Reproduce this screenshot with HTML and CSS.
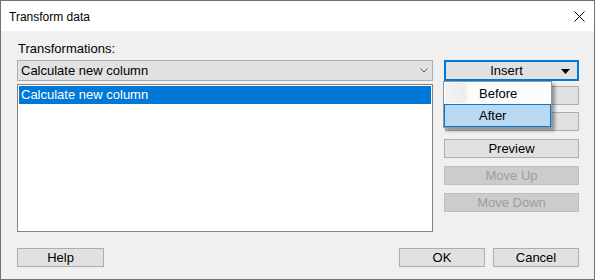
FILE: index.html
```html
<!DOCTYPE html>
<html lang="en">
<head>
    <meta charset="UTF-8">
    <title>Transform data</title>
    <link rel="stylesheet" href="styles.css">
</head>
<body>
    <div class="window">
        <div class="titlebar">
            <span class="title">Transform data</span>
            <svg class="close" width="11" height="11" viewBox="0 0 11 11">
                <path d="M0.5 0.5 L10.5 10.5 M10.5 0.5 L0.5 10.5" stroke="#000" stroke-width="1" fill="none"/>
            </svg>
        </div>
        <div class="content">
            <div class="main">
                <div class="left">
                    <div class="label">Transformations:</div>
                    <div class="combo">
                        <span>Calculate new column</span>
                        <svg class="chevron" width="8" height="5" viewBox="0 0 8 5">
                            <path d="M0.5 0.5 L4 4 L7.5 0.5" stroke="#5a5a5a" stroke-width="1" fill="none"/>
                        </svg>
                    </div>
                    <div class="list">
                        <div class="item selected">Calculate new column</div>
                    </div>
                </div>
                <div class="right">
                    <div class="insert-wrap">
                        <div class="btn insert">
                            <span>Insert</span>
                            <svg class="caret" width="9" height="5" viewBox="0 0 9 5">
                                <path d="M0 0 L9 0 L4.5 5 Z" fill="#000"/>
                            </svg>
                        </div>
                        <div class="menu">
                            <div class="menu-item"><span class="gutter"></span><span>Before</span></div>
                            <div class="menu-item active"><span class="gutter"></span><span>After</span></div>
                        </div>
                    </div>
                    <div class="btn hidden-one"></div>
                    <div class="btn hidden-two"></div>
                    <div class="btn">Preview</div>
                    <div class="btn disabled">Move Up</div>
                    <div class="btn disabled">Move Down</div>
                </div>
            </div>
            <div class="footer">
                <div class="btn small">Help</div>
                <div class="spacer"></div>
                <div class="btn small">OK</div>
                <div class="btn small">Cancel</div>
            </div>
        </div>
    </div>
</body>
</html>
```

FILE: styles.css
```css
body {
    margin: 0;
    font-family: "Liberation Sans", Arial, sans-serif;
    font-size: 13px;
    color: #000;
    background: #fff;
}
.window {
    width: 595px;
    height: 280px;
    box-sizing: border-box;
    border: 1px solid #707070;
    background: #f0f0f0;
    display: flex;
    flex-direction: column;
}
.titlebar {
    height: 30px;
    background: #fff;
    display: flex;
    align-items: center;
    padding: 0 9px 0 8px;
}
.title {
    font-size: 12px;
    flex: 1;
    margin-top: 2px;
}
.close {
    margin-top: 1px;
}
.content {
    flex: 1;
    padding: 10px 15px 12px 16px;
    display: flex;
    flex-direction: column;
}
.main {
    display: flex;
    gap: 11px;
}
.left {
    width: 416px;
}
.label {
    height: 15px;
    line-height: 15px;
    margin-bottom: 4px;
    padding-left: 1px;
}
.combo {
    height: 21px;
    box-sizing: border-box;
    border: 1px solid #adadad;
    background: #e1e1e1;
    display: flex;
    align-items: center;
    padding: 0 2px 0 3px;
}
.combo span {
    flex: 1;
}
.chevron {
    margin-right: 2px;
}
.list {
    margin-top: 3px;
    height: 148px;
    box-sizing: border-box;
    border: 1px solid #828282;
    background: #fff;
    padding: 1px;
}
.item {
    height: 18px;
    line-height: 17px;
    padding-left: 2px;
}
.selected {
    background: #0078d7;
    color: #fff;
}
.right {
    width: 135px;
    padding-top: 19px;
    display: flex;
    flex-direction: column;
}
.btn {
    height: 19px;
    box-sizing: border-box;
    border: 1px solid #adadad;
    background: #e1e1e1;
    text-align: center;
    line-height: 17px;
    margin-top: 8px;
}
.insert-wrap {
    position: relative;
}
.insert {
    height: 21px;
    margin-top: 0;
    border: 2px solid #0078d7;
    display: flex;
    align-items: center;
    justify-content: center;
    position: relative;
    padding-right: 10px;
}
.caret {
    position: absolute;
    right: 7px;
    top: 7px;
}
.hidden-one {
    margin-top: 5px;
    margin-left: 1px;
}
.hidden-two {
    margin-top: 7px;
    margin-left: 1px;
}
.disabled {
    background: #cccccc;
    border-color: #bfbfbf;
    color: #9d9d9d;
}
.menu {
    position: absolute;
    left: -1px;
    top: 21px;
    width: 109px;
    height: 47px;
    box-sizing: border-box;
    border: 1px solid #979797;
    background: #fcfcfc;
    box-shadow: 3px 3px 3px rgba(0, 0, 0, 0.35);
    display: flex;
    flex-direction: column;
    z-index: 2;
}
.menu-item {
    height: 22px;
    display: flex;
    align-items: center;
    box-sizing: border-box;
    border: 1px solid transparent;
}
.menu-item .gutter {
    width: 24px;
    height: 100%;
    margin-right: 10px;
    background: linear-gradient(to right, #f3f3f3, #ececec 80%, #fcfcfc);
}
.menu-item.active {
    height: 23px;
    background: #b9d9f3;
    border-color: #0078d7;
}
.menu-item.active .gutter {
    background: none;
}
.footer {
    margin-top: auto;
    display: flex;
    gap: 8px;
}
.footer .btn {
    margin-top: 0;
    width: 86px;
}
.footer .btn:first-child {
    margin-left: 0;
    width: 87px;
}
.spacer {
    flex: 1;
}
```
